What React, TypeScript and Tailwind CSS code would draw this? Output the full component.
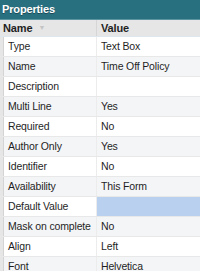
const rows: [string, string][] = [
  ["Type", "Text Box"],
  ["Name", "Time Off Policy"],
  ["Description", ""],
  ["Multi Line", "Yes"],
  ["Required", "No"],
  ["Author Only", "Yes"],
  ["Identifier", "No"],
  ["Availability", "This Form"],
  ["Default Value", ""],
  ["Mask on complete", "No"],
  ["Align", "Left"],
  ["Font", "Helvetica"],
];

export default function App() {
  return (
    <div className="h-[271px] w-[200px] overflow-hidden bg-white font-['Liberation_Sans',Arial,sans-serif] text-[10.5px] tracking-[-0.15px] text-[#1f1f1f]">
      <div className="flex h-5 items-center border-b border-[#5d94a1] bg-[#286f80] px-[2px] text-[11px] font-bold text-white [text-shadow:0_1px_0_rgba(0,0,0,0.35)]">
        Properties
      </div>
      <div className="flex h-[17px] border-b border-[#dfe7ee] bg-[#e6e6e6] text-[11px] font-bold">
        <div className="flex w-[97px] items-center border-r border-[#d6d6d6] pl-[3px]">
          Name
          <span className="ml-[6px] text-[7px] text-[#c4c4c4]">▼</span>
        </div>
        <div className="flex flex-1 items-center pl-[4px]">Value</div>
      </div>
      {rows.map(([name, value], i) => (
        <div
          key={name}
          className={
            i % 2 === 0
              ? "flex h-5 border-b border-[#e8e8e8] bg-white"
              : "flex h-5 border-b border-[#e8e8e8] bg-[#f4f5f7]"
          }
        >
          <div className="w-[4px] border-r border-[#d4d4d4] bg-[#e6e6e6]" />
          <div className="flex w-[93px] items-center overflow-hidden whitespace-nowrap border-r border-[#ececec] pl-[4px]">
            {name}
          </div>
          <div
            className={
              name === "Default Value"
                ? "flex flex-1 items-center whitespace-nowrap bg-[#b9d0ee] pl-[4px]"
                : "flex flex-1 items-center whitespace-nowrap pl-[4px]"
            }
          >
            {value}
          </div>
        </div>
      ))}
    </div>
  );
}
